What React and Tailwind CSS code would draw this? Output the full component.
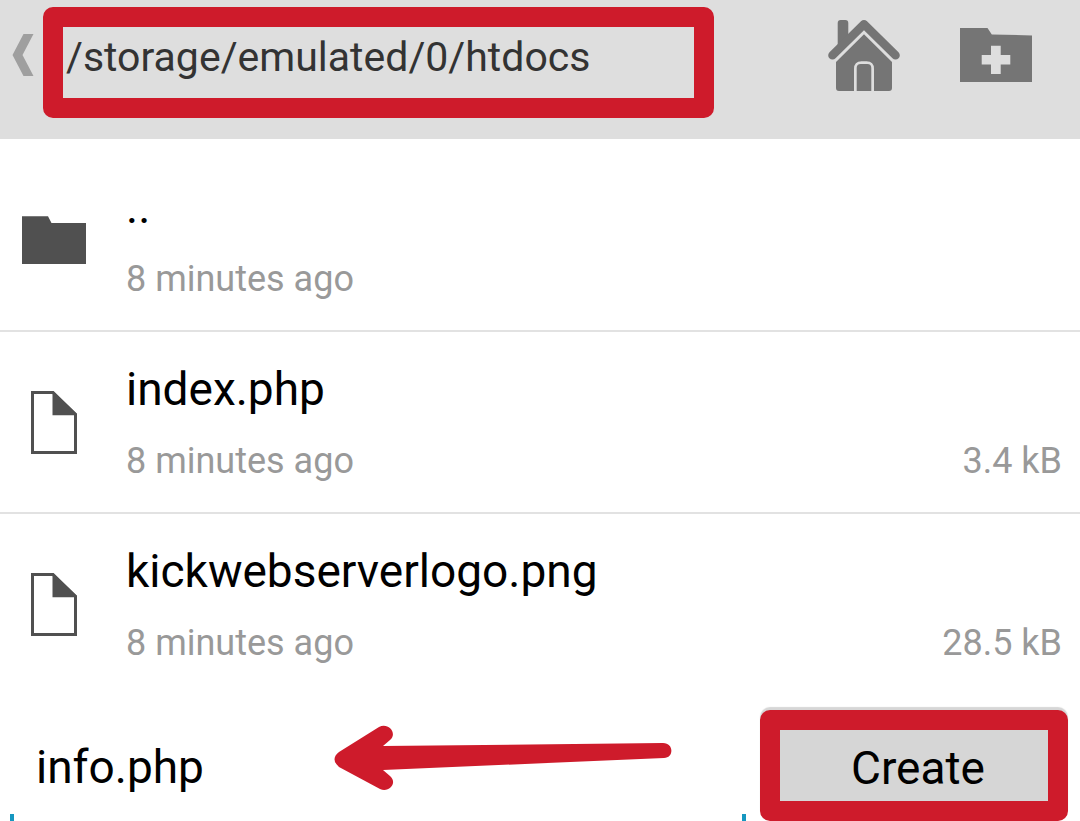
const entries = [
  { name: '..', kind: 'folder', age: '8 minutes ago', size: '' },
  { name: 'index.php', kind: 'file', age: '8 minutes ago', size: '3.4 kB' },
  { name: 'kickwebserverlogo.png', kind: 'file', age: '8 minutes ago', size: '28.5 kB' },
];

function BackIcon() {
  return (
    <svg width="22" height="42" viewBox="0 0 22 42" aria-hidden="true">
      <path d="M11.5 0H21.5L10.5 21L21.5 42H11.5L.5 21Z" fill="#9f9f9f" />
    </svg>
  );
}

function HomeIcon() {
  return (
    <svg width="72" height="72" viewBox="0 0 72 72" aria-hidden="true">
      <path d="M9.7 34V4Q9.7 1 12.7 1H17.3Q20.3 1 20.3 4V24Z" fill="#757575" />
      <path d="M4.5 36.3L36 5.2L67.5 36.3" fill="none" stroke="#757575" strokeWidth="8.6" strokeLinecap="round" strokeLinejoin="round" />
      <path
        d="M36 15.3L64 43V69Q64 72 61 72H46V50Q46 42.3 38.5 42.3H33.5Q26 42.3 26 50V72H11Q8 72 8 69V43Z"
        fill="#757575"
      />
      <path d="M28.7 72V49Q28.7 45 32.7 45H39.3Q43.3 45 43.3 49V72Z" fill="#757575" />
    </svg>
  );
}

function NewFolderIcon() {
  return (
    <svg width="72" height="54" viewBox="0 0 72 54" aria-hidden="true">
      <path d="M0 0H27.5L31.8 6.6L72 7.4V54H0Z" fill="#757575" />
      <path d="M31 17.7H40.7V27H50.3V36.5H40.7V46H31V36.5H21.7V27H31Z" fill="#dedede" />
    </svg>
  );
}

function FolderIcon() {
  return (
    <svg width="64" height="48" viewBox="0 0 64 48" aria-hidden="true">
      <path d="M0 .3H26L29.5 7H64V48H0Z" fill="#505050" />
    </svg>
  );
}

function FileIcon() {
  return (
    <svg width="46" height="64" viewBox="0 -1 46 64" aria-hidden="true">
      <path d="M1.5 1.5H22L44.5 23.5V61.5H1.5Z" fill="#fff" stroke="#505050" strokeWidth="3" />
      <path d="M21.5 0L46 23V24.3H21.5Z" fill="#505050" />
    </svg>
  );
}

function Arrow() {
  return (
    <svg width="338" height="66" viewBox="0 0 338 66" aria-hidden="true">
      <path
        d="M5 27L45 2C54 -3 64 8 56 15L49 21L329 18C340 18 340 33 330 33L49 45L56 51C64 58 55 68 46 64L5 42Q-4 34 5 27Z"
        fill="#ce1b2b"
      />
    </svg>
  );
}

function Entry({ entry }) {
  return (
    <li className="flex h-[182px] items-center border-b-2 border-[#e2e2e2] pr-[18px] last:border-transparent">
      <div className="flex w-[108px] shrink-0 justify-center">
        {entry.kind === 'folder' ? <FolderIcon /> : <FileIcon />}
      </div>
      <div className="min-w-0 flex-1 pt-[3px] pl-[18px]">
        <div className="pb-[25px] text-[46px] leading-[50px] text-black">{entry.name}</div>
        <div className="flex justify-between text-[36px] leading-[44px] text-[#999999]">
          <span>{entry.age}</span>
          <span>{entry.size}</span>
        </div>
      </div>
    </li>
  );
}

export default function App() {
  return (
    <div className="flex min-h-screen flex-col overflow-hidden bg-white font-['Roboto',sans-serif]">
      <header className="flex h-[139px] items-start bg-[#dedede] pr-12">
        <button type="button" aria-label="Back" className="mt-[34px] ml-3 shrink-0">
          <BackIcon />
        </button>
        <h1 className="mt-[7px] ml-[9px] h-[111px] min-w-0 flex-1 rounded-[10px] border-20 border-[#ce1b2b] pl-[3px] text-[41px] leading-[60px] text-[#333333]">
          /storage/emulated/0/htdocs
        </h1>
        <button type="button" aria-label="Home" className="mt-[19px] ml-[114px] shrink-0">
          <HomeIcon />
        </button>
        <button type="button" aria-label="New folder" className="mt-7 ml-[60px] shrink-0">
          <NewFolderIcon />
        </button>
      </header>

      <ul className="pt-[11px]">
        {entries.map((entry) => (
          <Entry key={entry.name} entry={entry} />
        ))}
      </ul>

      <form className="flex flex-1 items-start pt-[11px] pr-3" onSubmit={(e) => e.preventDefault()}>
        <div className="relative mr-[14px] ml-[10px] min-w-0 flex-1">
          <input
            type="text"
            aria-label="File name"
            defaultValue="info.php"
            className="block h-[107px] w-full pt-3 pl-[26px] text-[46px] text-black outline-none"
          />
          <div className="h-[7px] border-x-4 border-[#1597c0]" />
          <div className="pointer-events-none absolute top-[18px] left-[324px]">
            <Arrow />
          </div>
        </div>
        <button
          type="submit"
          className="mt-[3px] h-[111px] w-[308px] shrink-0 rounded-[10px] border-20 border-[#ce1b2b] bg-[#d6d6d6] pt-1 pl-2 text-[46px] text-black shadow-[0_-3px_1px_#d6d6d6]"
        >
          Create
        </button>
      </form>
    </div>
  );
}
